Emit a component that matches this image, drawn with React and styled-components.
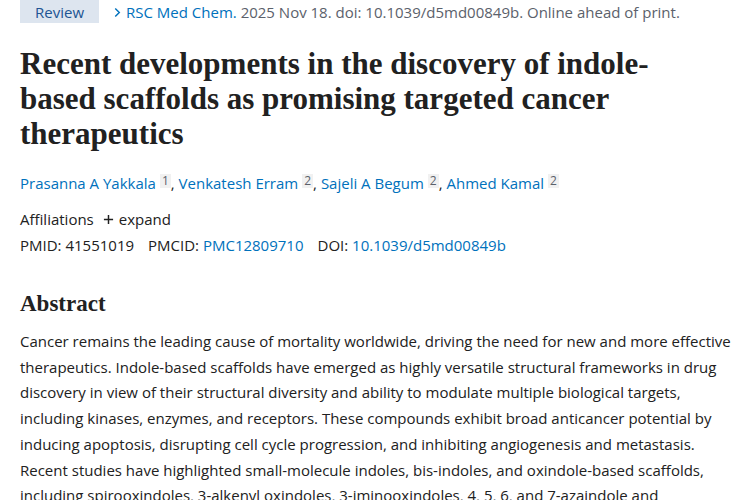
import React from 'react'
import styled, { createGlobalStyle } from 'styled-components'

const GlobalStyle = createGlobalStyle`
  html, body {
    margin: 0;
    padding: 0;
    background: #fff;
  }
  body {
    font-family: "Open Sans", "Noto Sans", sans-serif;
    color: #212121;
  }
`

const authors = [
  { name: 'Prasanna A Yakkala', aff: '1' },
  { name: 'Venkatesh Erram', aff: '2' },
  { name: 'Sajeli A Begum', aff: '2' },
  { name: 'Ahmed Kamal', aff: '2' },
]

const abstractLines = [
  'Cancer remains the leading cause of mortality worldwide, driving the need for new and more effective',
  'therapeutics. Indole-based scaffolds have emerged as highly versatile structural frameworks in drug',
  'discovery in view of their structural diversity and ability to modulate multiple biological targets,',
  'including kinases, enzymes, and receptors. These compounds exhibit broad anticancer potential by',
  'inducing apoptosis, disrupting cell cycle progression, and inhibiting angiogenesis and metastasis.',
  'Recent studies have highlighted small-molecule indoles, bis-indoles, and oxindole-based scaffolds,',
  'including spirooxindoles, 3-alkenyl oxindoles, 3-iminooxindoles, 4, 5, 6, and 7-azaindole and',
  'related derivatives as potent anticancer agents.',
]

function App() {
  return (
    <>
      <GlobalStyle />
      <Page>
        <HeadingBar>
          <Badge>Review</Badge>
          <Citation>
            <Chevron viewBox="0 0 10 12" aria-hidden="true">
              <path d="M2.5 1.5 L7 6 L2.5 10.5" />
            </Chevron>
            <Journal>RSC Med Chem.</Journal> 2025 Nov 18. doi: 10.1039/d5md00849b. Online ahead of print.
          </Citation>
        </HeadingBar>

        <Title>
          Recent developments in the discovery of indole-based scaffolds as promising targeted cancer therapeutics
        </Title>

        <Authors>
          {authors.map((a, i) => (
            <React.Fragment key={a.name}>
              <AuthorLink>{a.name}</AuthorLink>
              <Sup>{a.aff}</Sup>
              {i < authors.length - 1 && ', '}
            </React.Fragment>
          ))}
        </Authors>

        <Affiliations>
          Affiliations
          <Expand>
            <PlusIcon viewBox="0 0 12 12" aria-hidden="true">
              <path d="M6 1 V11 M1 6 H11" />
            </PlusIcon>
            expand
          </Expand>
        </Affiliations>

        <Identifiers>
          <Ident>PMID: 41551019</Ident>
          <Ident>PMCID: <Link>PMC12809710</Link></Ident>
          <Ident>DOI: <Link>10.1039/d5md00849b</Link></Ident>
        </Identifiers>

        <SectionTitle>Abstract</SectionTitle>
        <Abstract>
          {abstractLines.map((line) => (
            <AbstractLine key={line}>{line}</AbstractLine>
          ))}
        </Abstract>
      </Page>
    </>
  )
}

const Page = styled.div`
  padding: 0 20px;
  width: 750px;
  box-sizing: border-box;
`

const HeadingBar = styled.div`
  display: flex;
  align-items: center;
  gap: 14px;
  height: 23px;
  font-size: 15px;
`

const Badge = styled.span`
  display: flex;
  align-items: center;
  height: 23px;
  padding: 0 15px;
  background: #dde5ef;
  color: #205493;
`

const Citation = styled.span`
  color: #5b616b;
  white-space: nowrap;
`

const Chevron = styled.svg`
  width: 9px;
  height: 11px;
  margin-right: 4px;
  fill: none;
  stroke: #0071bc;
  stroke-width: 1.6;
`

const Journal = styled.span`
  color: #0071bc;
`

const Title = styled.h1`
  margin: 23px 0 0;
  width: 680px;
  font-family: "Liberation Serif", "DejaVu Serif", serif;
  font-weight: bold;
  font-size: 31px;
  line-height: 35px;
  color: #212121;
`

const Authors = styled.div`
  margin-top: 21px;
  font-size: 15px;
  line-height: 22px;
  color: #212121;
`

const AuthorLink = styled.span`
  color: #0071bc;
`

const Sup = styled.sup`
  display: inline-block;
  margin-left: 4px;
  padding: 0 2px;
  background: #f1f1f1;
  color: #5b616b;
  font-size: 12px;
  line-height: 14px;
  vertical-align: 4px;
`

const Affiliations = styled.div`
  margin-top: 14px;
  display: flex;
  align-items: center;
  gap: 9px;
  font-size: 15px;
  line-height: 22px;
`

const Expand = styled.span`
  display: flex;
  align-items: center;
  gap: 5px;
`

const PlusIcon = styled.svg`
  width: 11px;
  height: 11px;
  fill: none;
  stroke: #212121;
  stroke-width: 1.6;
`

const Identifiers = styled.div`
  margin-top: 4px;
  display: flex;
  gap: 14px;
  font-size: 15px;
  line-height: 22px;
`

const Ident = styled.span``

const Link = styled.span`
  color: #0071bc;
`

const SectionTitle = styled.h2`
  margin: 34px 0 0;
  font-family: "Liberation Serif", "DejaVu Serif", serif;
  font-weight: bold;
  font-size: 23px;
  line-height: 28px;
`

const Abstract = styled.div`
  margin: 11px 0 0;
  font-size: 15px;
  line-height: 25.7px;
`

const AbstractLine = styled.span`
  display: block;
  white-space: nowrap;
`

export default App
